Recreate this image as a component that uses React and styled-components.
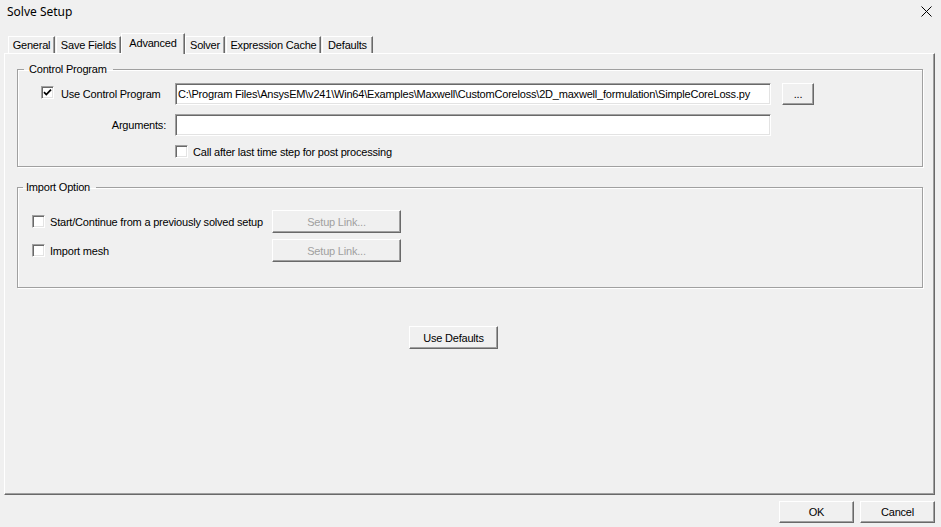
import React from 'react';
import styled, { createGlobalStyle } from 'styled-components';

const GlobalStyle = createGlobalStyle`
  html, body { margin: 0; padding: 0; background: #f0f0f0; }
  body { font-family: "Liberation Sans", Arial, sans-serif; }
  * { box-sizing: border-box; }
`;

const ui = `
  font-family: "Liberation Sans", Arial, sans-serif;
  font-size: 11px;
  letter-spacing: -0.2px;
  color: #000;
`;

const Dialog = styled.div`
  ${ui}
  width: 941px;
  height: 527px;
  background: #f0f0f0;
  display: flex;
  flex-direction: column;
  overflow: hidden;
`;

const TitleBar = styled.div`
  height: 22px;
  flex: none;
  display: flex;
  align-items: center;
  justify-content: space-between;
  padding: 0 9px 0 7px;
  font-family: "Noto Sans", "Liberation Sans", sans-serif;
  font-size: 12px;
  letter-spacing: 0;
`;

const CloseIcon = styled.svg`
  width: 11px;
  height: 11px;
  display: block;
`;

const TabStrip = styled.div`
  flex: none;
  height: 20px;
  margin-top: 11px;
  padding-left: 8px;
  display: flex;
  align-items: flex-end;
  gap: 1px;
  position: relative;
  z-index: 1;
`;

const Tab = styled.div`
  width: ${p => p.$w}px;
  height: ${p => (p.$active ? 21 : 17)}px;
  margin: ${p => (p.$active ? '0 -1px -1px -1px' : '0')};
  background: #f0f0f0;
  border-top: 1px solid #fff;
  border-left: 1px solid #fff;
  border-right: 1px solid #696969;
  box-shadow: inset -1px 0 0 #a0a0a0;
  display: flex;
  align-items: center;
  justify-content: center;
  padding-bottom: ${p => (p.$active ? 3 : 0)}px;
  white-space: nowrap;
`;

const Page = styled.div`
  flex: 1;
  margin: 0 6px 0 4px;
  border-top: 1px solid #fff;
  border-left: 1px solid #fff;
  border-right: 1px solid #696969;
  border-bottom: 1px solid #696969;
  box-shadow: inset -1px -1px 0 #a0a0a0;
  padding: 0 11px 0 12px;
  display: flex;
  flex-direction: column;
`;

const Group = styled.fieldset`
  margin: ${p => p.$top}px 0 0 0;
  padding: 0;
  min-width: 0;
  border: 1px solid #a0a0a0;
  box-shadow: inset 1px 1px 0 #fff, 1px 1px 0 #fff;
`;

const Legend = styled.legend`
  margin-left: ${p => p.$indent}px;
  padding: 0 6px 0 ${p => p.$pad}px;
  line-height: 13px;
`;

const ControlGrid = styled.div`
  display: grid;
  grid-template-columns: 146px 596px 32px;
  grid-template-rows: 22px 22px 13px;
  column-gap: 11px;
  row-gap: 9px;
  padding: 7px 0 8px 0;
  align-items: center;
`;

const ImportGrid = styled.div`
  display: grid;
  grid-template-columns: 240px 129px;
  grid-auto-rows: 23px;
  row-gap: 6px;
  padding: 16px 0 25px 14px;
  align-items: center;
`;

const CheckField = styled.label`
  display: flex;
  align-items: center;
  gap: ${p => p.$gap}px;
  padding-left: ${p => p.$indent || 0}px;
  white-space: nowrap;
  grid-column: ${p => p.$col || 'auto'};
`;

const Box = styled.span`
  width: 13px;
  height: 13px;
  flex: none;
  background: #fff;
  border: 1px solid;
  border-color: #a0a0a0 #fff #fff #a0a0a0;
  box-shadow: inset 1px 1px 0 #696969, inset -1px -1px 0 #e3e3e3;
  display: flex;
  align-items: center;
  justify-content: center;
  margin-top: ${p => p.$lift || 0}px;
`;

const FieldLabel = styled.span`
  text-align: right;
  margin-right: -2px;
  white-space: nowrap;
`;

const TextBox = styled.input`
  ${ui}
  width: 100%;
  height: 22px;
  margin: 0;
  padding: 0 2px;
  background: #fff;
  border: 1px solid;
  border-color: #a0a0a0 #fff #fff #a0a0a0;
  box-shadow: inset 1px 1px 0 #696969, inset -1px -1px 0 #e3e3e3;
  outline: none;
`;

const Button = styled.button`
  ${ui}
  width: ${p => p.$w}px;
  height: ${p => p.$h || 23}px;
  margin: 0;
  padding: 0;
  background: #f0f0f0;
  color: ${p => (p.disabled ? '#a0a0a0' : '#000')};
  border: 1px solid;
  border-color: #fff #696969 #696969 #fff;
  box-shadow: inset -1px -1px 0 #a0a0a0;
  flex: none;
`;

const DefaultsRow = styled.div`
  margin-top: 38px;
  padding-left: 392px;
`;

const Footer = styled.div`
  flex: none;
  height: 32px;
  display: flex;
  justify-content: flex-end;
  gap: 6px;
  padding: 6px 6px 0 0;
`;

const tabs = [
  { label: 'General', w: 47 },
  { label: 'Save Fields', w: 65 },
  { label: 'Advanced', w: 64, active: true },
  { label: 'Solver', w: 40 },
  { label: 'Expression Cache', w: 95 },
  { label: 'Defaults', w: 51 },
];

const programPath =
  'C:\\Program Files\\AnsysEM\\v241\\Win64\\Examples\\Maxwell\\CustomCoreloss\\2D_maxwell_formulation\\SimpleCoreLoss.py';

const Check = ({ checked, lift }) => (
  <Box $lift={lift}>
    {checked && (
      <svg width="9" height="9" viewBox="0 0 9 9">
        <path d="M1 4.2 L3.3 6.6 L8 1.6" fill="none" stroke="#000" strokeWidth="1.7" />
      </svg>
    )}
  </Box>
);

const App = () => (
  <>
    <GlobalStyle />
    <Dialog>
      <TitleBar>
        <span>Solve Setup</span>
        <CloseIcon viewBox="0 0 11 11">
          <path d="M0.5 0.5 L10.5 10.5 M10.5 0.5 L0.5 10.5" stroke="#000" strokeWidth="1" />
        </CloseIcon>
      </TitleBar>

      <TabStrip>
        {tabs.map(t => (
          <Tab key={t.label} $w={t.w} $active={t.active}>{t.label}</Tab>
        ))}
      </TabStrip>

      <Page>
        <Group $top={9}>
          <Legend $indent={6} $pad={5}>Control Program</Legend>
          <ControlGrid>
            <CheckField $gap={7} $indent={23}>
              <Check checked lift={-4} />
              Use Control Program
            </CheckField>
            <TextBox readOnly value={programPath} />
            <Button $w={32} $h={22}>...</Button>

            <FieldLabel>Arguments:</FieldLabel>
            <TextBox readOnly value="" />
            <span />

            <CheckField $gap={5} $col="2 / 4">
              <Check />
              Call after last time step for post processing
            </CheckField>
          </ControlGrid>
        </Group>

        <Group $top={14}>
          <Legend $indent={5} $pad={3}>Import Option</Legend>
          <ImportGrid>
            <CheckField $gap={5}>
              <Check />
              Start/Continue from a previously solved setup
            </CheckField>
            <Button $w={129} disabled>Setup Link...</Button>
            <CheckField $gap={5}>
              <Check />
              Import mesh
            </CheckField>
            <Button $w={129} disabled>Setup Link...</Button>
          </ImportGrid>
        </Group>

        <DefaultsRow>
          <Button $w={89}>Use Defaults</Button>
        </DefaultsRow>
      </Page>

      <Footer>
        <Button $w={75} $h={22}>OK</Button>
        <Button $w={75} $h={22}>Cancel</Button>
      </Footer>
    </Dialog>
  </>
);

export default App;
